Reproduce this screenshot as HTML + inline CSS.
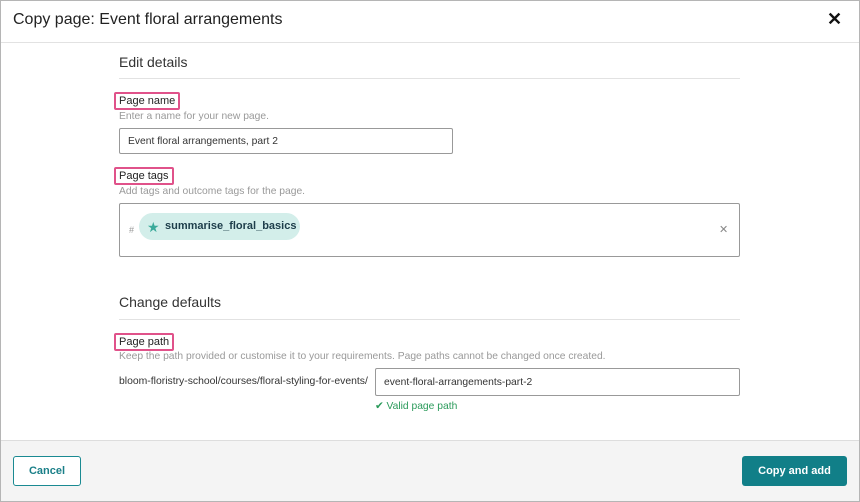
<!DOCTYPE html>
<html><head><style>
*{box-sizing:border-box;margin:0;padding:0}
body{width:860px;height:502px;overflow:hidden;background:#fff;font-family:"Liberation Sans",sans-serif;color:#333;position:relative}
.frame{position:absolute;left:0;top:0;width:860px;height:502px;border:1px solid #b5b5b5}
.a{position:absolute;white-space:nowrap}
.lbl{font-size:11px;color:#222;border:2px solid #e0528a;padding:1px 3px;border-radius:2px}
.hint{font-size:10.3px;color:#999}
.hr{position:absolute;height:1px;background:#e2e2e2}
.inp{position:absolute;border:1px solid #999;border-radius:2px;background:#fff;font-size:10.3px;color:#333}
</style></head><body>
<div class="frame"></div>
<div class="a" style="left:13px;top:11px;font-size:16px;color:#222">Copy page: Event floral arrangements</div>
<div class="a" style="left:827px;top:9px;font-size:18px;font-weight:bold;color:#111">✕</div>
<div class="hr" style="left:1px;top:42px;width:858px"></div>
<div class="a" style="left:119px;top:54px;font-size:14px;color:#333">Edit details</div>
<div class="hr" style="left:119px;top:78px;width:621px"></div>
<div class="a lbl" style="left:114px;top:92px">Page name</div>
<div class="a hint" style="left:119px;top:111px">Enter a name for your new page.</div>
<div class="inp" style="left:119px;top:128px;width:334px;height:26px;padding:7px 8px">Event floral arrangements, part 2</div>
<div class="a lbl" style="left:114px;top:167px">Page tags</div>
<div class="a hint" style="left:119px;top:186px">Add tags and outcome tags for the page.</div>
<div class="inp" style="left:119px;top:203px;width:621px;height:54px"></div>
<div class="a" style="left:129px;top:225px;font-size:9px;color:#999">#</div>
<div class="a" style="left:139px;top:213px;width:161px;height:27px;border-radius:14px;background:#d3eeea"></div>
<div class="a" style="left:147px;top:219px;font-size:14px;color:#3aaa9a">★</div>
<div class="a" style="left:165px;top:220px;font-size:11px;font-weight:bold;color:#1d3d4a">summarise_floral_basics</div>
<div class="a" style="left:719px;top:223px;font-size:11px;color:#888">✕</div>
<div class="a" style="left:119px;top:294px;font-size:14px;color:#333">Change defaults</div>
<div class="hr" style="left:119px;top:319px;width:621px"></div>
<div class="a lbl" style="left:114px;top:333px">Page path</div>
<div class="a hint" style="left:119px;top:351px">Keep the path provided or customise it to your requirements. Page paths cannot be changed once created.</div>
<div class="a" style="left:119px;top:376px;font-size:10.4px;color:#333">bloom-floristry-school/courses/floral-styling-for-events/</div>
<div class="inp" style="left:375px;top:368px;width:365px;height:28px;padding:8px 8px">event-floral-arrangements-part-2</div>
<div class="a" style="left:375px;top:400px;font-size:10.3px;color:#2a9a5a">✔ Valid page path</div>
<div class="a" style="left:1px;top:440px;width:858px;height:61px;background:#f4f4f4;border-top:1px solid #ddd"></div>
<div class="a" style="left:13px;top:456px;width:68px;height:30px;border:1px solid #1a8a92;border-radius:3px;background:#fff;color:#1a7f88;font-size:11px;font-weight:bold;text-align:center;line-height:28px">Cancel</div>
<div class="a" style="left:742px;top:456px;width:105px;height:30px;border-radius:3px;background:#117f88;color:#fff;font-size:11px;font-weight:bold;text-align:center;line-height:30px">Copy and add</div>
</body></html>
